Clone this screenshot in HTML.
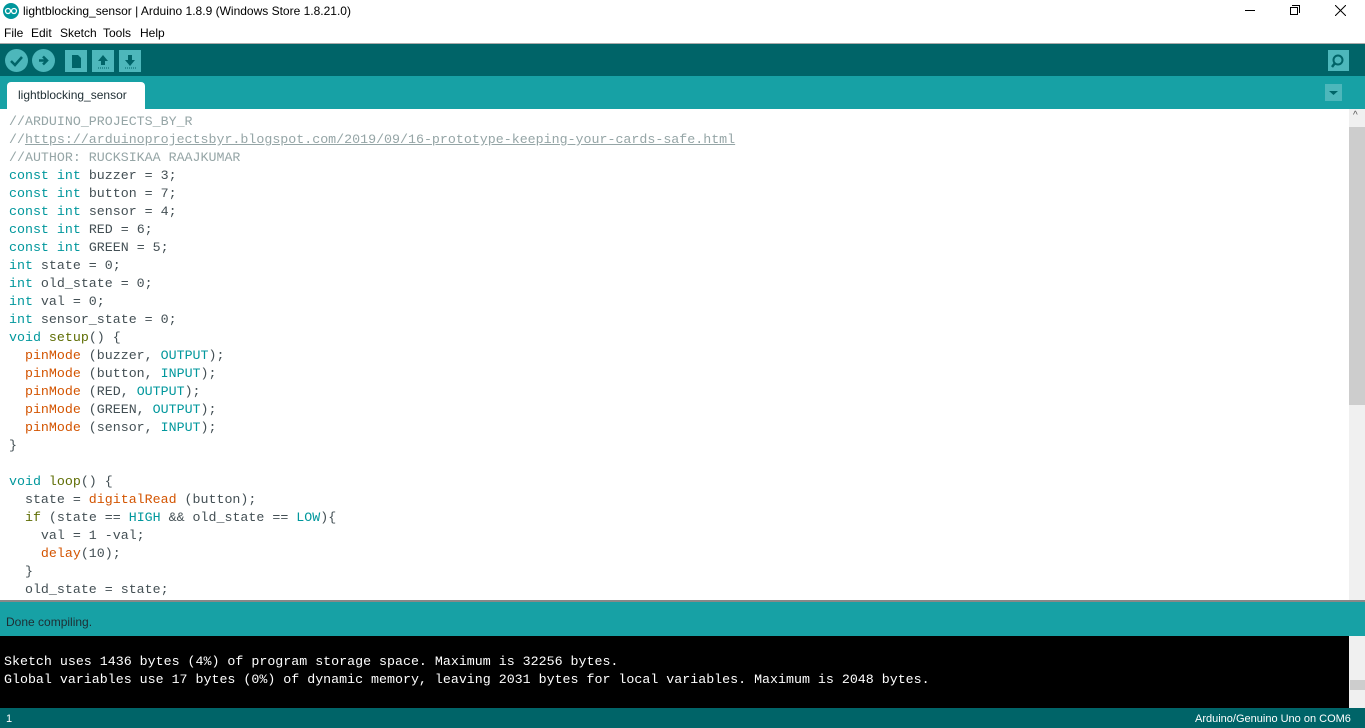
<!DOCTYPE html>
<html><head><meta charset="utf-8"><style>
*{margin:0;padding:0;box-sizing:border-box}
body{width:1365px;height:728px;overflow:hidden;background:#fff;font-family:"Liberation Sans",sans-serif;position:relative}
.abs{position:absolute}
#title{left:0;top:0;width:1365px;height:22px;background:#fff;font-size:12px;color:#000}
#menu{left:0;top:22px;width:1365px;height:20px;font-size:12px}
#menu span{position:absolute;top:4px}
#tb{left:0;top:43px;width:1365px;height:33px;background:#006468;border-top:1px solid #aaa}
.btn{position:absolute;top:6px;width:22px;height:22px;background:#4db7bb}
.rnd{border-radius:50%;width:23px;height:23px;top:5px}
#tabs{left:0;top:76px;width:1365px;height:33px;background:#17a1a5}
#tab{left:7px;top:82px;width:138px;height:27px;background:#fff;border-radius:4px 4px 0 0;font-size:12px;color:#1e2d33;padding:6px 0 0 11px}
#ed{left:0;top:110px;width:1349px;height:490px;background:#fff;font-family:"Liberation Mono",monospace;font-size:13.3px;color:#434f54}
#ed div{position:absolute;left:9px;height:18px;line-height:18px;white-space:pre}
.k{color:#00979c}.f{color:#d35400}.c{color:#95a5a6}.o{color:#5e6d03}
#sb{left:1349px;top:109px;width:16px;height:491px;background:#f0f0f0}
#st{left:0;top:600px;width:1365px;height:36px;background:#17a1a5;border-top:2px solid #888;font-size:12px;color:#1e2d33;padding:13px 0 0 6px}
#con{left:0;top:636px;width:1349px;height:72px;background:#000;color:#fff;font-family:"Liberation Mono",monospace;font-size:13.3px;padding:17px 0 0 4px;line-height:18px;white-space:pre}
#csb{left:1349px;top:636px;width:16px;height:72px;background:#f0f0f0}
#bot{left:0;top:708px;width:1365px;height:20px;background:#006468;color:#fff;font-size:11px}
</style></head><body>
<div id="title" class="abs">
<svg class="abs" style="left:3px;top:3px" width="16" height="16"><circle cx="8" cy="8" r="8" fill="#00979c"/><circle cx="5" cy="8" r="2.5" fill="none" stroke="#fff" stroke-width="1.3"/><circle cx="11" cy="8" r="2.5" fill="none" stroke="#fff" stroke-width="1.3"/></svg>
<span class="abs" style="left:23px;top:4px">lightblocking_sensor | Arduino 1.8.9 (Windows Store 1.8.21.0)</span>
<div class="abs" style="left:1245px;top:10px;width:10px;height:1px;background:#000"></div>
<div class="abs" style="left:1290px;top:7px;width:8px;height:8px;border:1px solid #000"></div>
<div class="abs" style="left:1292px;top:5px;width:8px;height:8px;border-top:1px solid #000;border-right:1px solid #000"></div>
<svg class="abs" style="left:1335px;top:5px" width="11" height="11"><path d="M0 0L11 11M11 0L0 11" stroke="#000" stroke-width="1"/></svg>
</div>
<div id="menu" class="abs"><span style="left:4px">File</span><span style="left:31px">Edit</span><span style="left:60px">Sketch</span><span style="left:103px">Tools</span><span style="left:140px">Help</span></div>
<div id="tb" class="abs">
<div class="btn rnd" style="left:5px"><svg width="23" height="23"><path d="M6 12l4 4 7-8" stroke="#006468" stroke-width="2.5" fill="none"/></svg></div>
<div class="btn rnd" style="left:32px"><svg width="23" height="23"><path d="M7 11.5h8M11 7.5l4 4-4 4" stroke="#006468" stroke-width="2.5" fill="none"/></svg></div>
<div class="btn" style="left:65px"><svg width="22" height="22"><path d="M7 5h6l3 3v10H7z" fill="#006468"/></svg></div>
<div class="btn" style="left:92px"><svg width="22" height="22"><path d="M11 5l5 6h-3v4H9v-4H6z" fill="#006468"/><path d="M6 18h11" stroke="#006468" stroke-dasharray="1 1"/></svg></div>
<div class="btn" style="left:119px"><svg width="22" height="22"><path d="M11 16l5-6h-3V5H9v5H6z" fill="#006468"/><path d="M6 18h11" stroke="#006468" stroke-dasharray="1 1"/></svg></div>
<div class="btn" style="left:1328px;top:6px;width:21px;height:21px"><svg width="21" height="21"><circle cx="10" cy="10" r="4.5" stroke="#006468" stroke-width="2" fill="none"/><path d="M7 13l-3 4" stroke="#006468" stroke-width="2.5"/></svg></div>
</div>
<div id="tabs" class="abs"><div class="abs" style="left:1325px;top:8px;width:17px;height:17px;background:#4db7bb"><svg width="17" height="17"><path d="M4 7h9l-4.5 4z" fill="#006468"/></svg></div></div>
<div id="tab" class="abs">lightblocking_sensor</div>
<div id="ed" class="abs">
<div style="top:3px" class="c">//ARDUINO_PROJECTS_BY_R</div>
<div style="top:21px" class="c">//<u>https://arduinoprojectsbyr.blogspot.com/2019/09/16-prototype-keeping-your-cards-safe.html</u></div>
<div style="top:39px" class="c">//AUTHOR: RUCKSIKAA RAAJKUMAR</div>
<div style="top:57px"><span class="k">const</span> <span class="k">int</span> buzzer = 3;</div>
<div style="top:75px"><span class="k">const</span> <span class="k">int</span> button = 7;</div>
<div style="top:93px"><span class="k">const</span> <span class="k">int</span> sensor = 4;</div>
<div style="top:111px"><span class="k">const</span> <span class="k">int</span> RED = 6;</div>
<div style="top:129px"><span class="k">const</span> <span class="k">int</span> GREEN = 5;</div>
<div style="top:147px"><span class="k">int</span> state = 0;</div>
<div style="top:165px"><span class="k">int</span> old_state = 0;</div>
<div style="top:183px"><span class="k">int</span> val = 0;</div>
<div style="top:201px"><span class="k">int</span> sensor_state = 0;</div>
<div style="top:219px"><span class="k">void</span> <span class="o">setup</span>() {</div>
<div style="top:237px">  <span class="f">pinMode</span> (buzzer, <span class="k">OUTPUT</span>);</div>
<div style="top:255px">  <span class="f">pinMode</span> (button, <span class="k">INPUT</span>);</div>
<div style="top:273px">  <span class="f">pinMode</span> (RED, <span class="k">OUTPUT</span>);</div>
<div style="top:291px">  <span class="f">pinMode</span> (GREEN, <span class="k">OUTPUT</span>);</div>
<div style="top:309px">  <span class="f">pinMode</span> (sensor, <span class="k">INPUT</span>);</div>
<div style="top:327px">}</div>
<div style="top:363px"><span class="k">void</span> <span class="o">loop</span>() {</div>
<div style="top:381px">  state = <span class="f">digitalRead</span> (button);</div>
<div style="top:399px">  <span class="o">if</span> (state == <span class="k">HIGH</span> &amp;&amp; old_state == <span class="k">LOW</span>){</div>
<div style="top:417px">    val = 1 -val;</div>
<div style="top:435px">    <span class="f">delay</span>(10);</div>
<div style="top:453px">  }</div>
<div style="top:471px">  old_state = state;</div>
</div>
<div id="sb" class="abs"><div class="abs" style="left:0;top:18px;width:16px;height:278px;background:#cdcdcd"></div>
<span class="abs" style="left:4px;top:1px;font-size:10px;color:#555">^</span></div>
<div id="st" class="abs">Done compiling.</div>
<div id="con" class="abs">Sketch uses 1436 bytes (4%) of program storage space. Maximum is 32256 bytes.
Global variables use 17 bytes (0%) of dynamic memory, leaving 2031 bytes for local variables. Maximum is 2048 bytes.</div>
<div id="csb" class="abs"><div class="abs" style="left:1px;top:44px;width:15px;height:10px;background:#cdcdcd"></div></div>
<div id="bot" class="abs"><span class="abs" style="left:6px;top:5px">1</span><span class="abs" style="left:1195px;top:5px">Arduino/Genuino Uno on COM6</span></div>
</body></html>
